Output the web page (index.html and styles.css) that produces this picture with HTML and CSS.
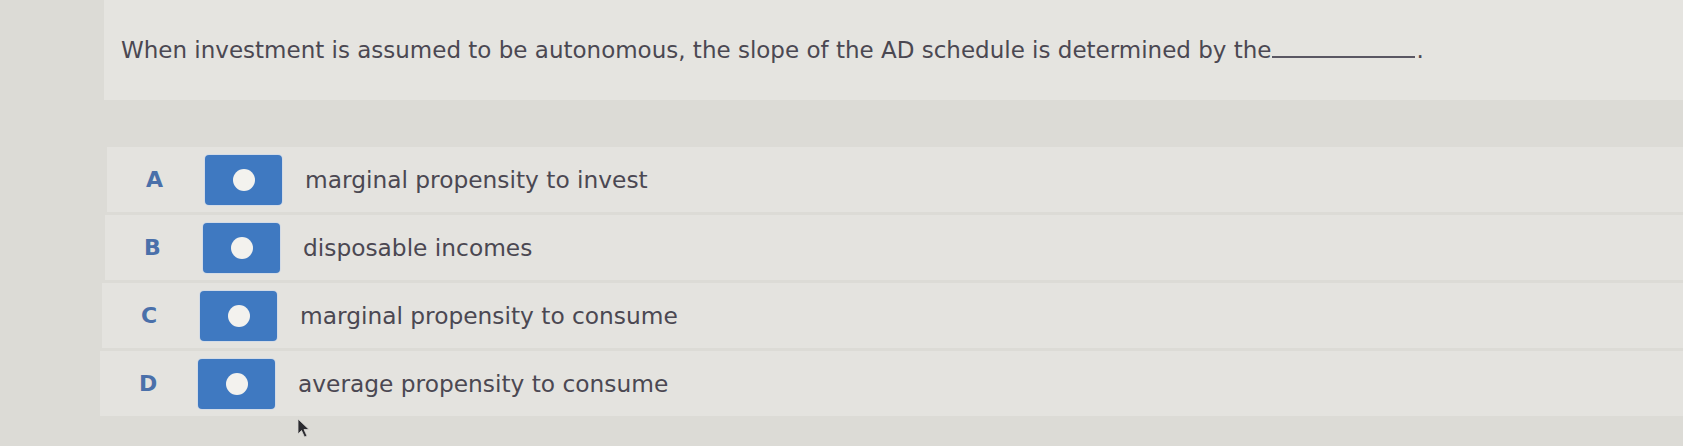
FILE: index.html
```html
<!DOCTYPE html>
<html>
<head>
<meta charset="utf-8">
<link rel="stylesheet" href="styles.css">
</head>
<body>
<div class="page">
  <div class="question">
    <p class="qtext">When investment is assumed to be autonomous, the slope of the AD schedule is determined by the<span class="blank"></span>.</p>
  </div>
  <div class="band"></div>
  <div class="options">
    <div class="option">
      <span class="letter">A</span>
      <span class="radio"><span class="dot"></span></span>
      <span class="label">marginal propensity to invest</span>
    </div>
    <div class="option">
      <span class="letter">B</span>
      <span class="radio"><span class="dot"></span></span>
      <span class="label">disposable incomes</span>
    </div>
    <div class="option">
      <span class="letter">C</span>
      <span class="radio"><span class="dot"></span></span>
      <span class="label">marginal propensity to consume</span>
    </div>
    <div class="option">
      <span class="letter">D</span>
      <span class="radio"><span class="dot"></span></span>
      <span class="label">average propensity to consume</span>
    </div>
  </div>
  <svg class="cursor" width="14" height="20" viewBox="0 0 14 20">
    <path d="M1 1 L1 16 L4.5 12.5 L7.5 19 L10 18 L7 11.5 L12 11.5 Z" fill="#2b2b30" stroke="#d8d7d3" stroke-width="0.8"/>
  </svg>
</div>
</body>
</html>
```
FILE: styles.css
```css
html, body {
  margin: 0;
  padding: 0;
}
body {
  background: #dcdbd6;
  width: 1683px;
  height: 446px;
  overflow: hidden;
  font-family: "DejaVu Sans", Verdana, sans-serif;
}
.page {
  position: relative;
  height: 446px;
}
.question {
  margin-left: 104px;
  height: 100px;
  background: #e5e4e0;
  display: flex;
  align-items: flex-start;
}
.qtext {
  margin: 0;
  padding: 32px 0 0 17px;
  font-size: 23px;
  line-height: 28px;
  color: #4b4852;
}
.blank {
  display: inline-block;
  width: 143px;
  height: 24px;
  border-bottom: 2px solid #5a5763;
  vertical-align: baseline;
  margin-left: 1px;
  margin-right: 1px;
}
.band {
  height: 47px;
}
.options {
  display: flex;
  flex-direction: column;
  gap: 3px;
}
.option {
  height: 65px;
  background: #e4e3df;
  display: flex;
  align-items: center;
  padding-left: 39px;
  margin-left: 107px;
}
.option:nth-child(2) { margin-left: 105px; }
.option:nth-child(3) { margin-left: 102px; }
.option:nth-child(4) { margin-left: 100px; }
.letter {
  width: 59px;
  font-weight: bold;
  font-size: 22px;
  color: #4a70aa;
}
.radio {
  width: 77px;
  height: 50px;
  border-radius: 4px;
  background: #3f79c1;
  display: flex;
  align-items: center;
  justify-content: center;
  box-shadow: 0 0 0 1px #d3dbe6;
}
.dot {
  width: 22px;
  height: 22px;
  border-radius: 50%;
  background: #f3f2ee;
}
.label {
  margin-left: 23px;
  font-size: 23.3px;
  color: #4b4852;
}
.cursor {
  position: absolute;
  left: 297px;
  top: 418px;
}
```
